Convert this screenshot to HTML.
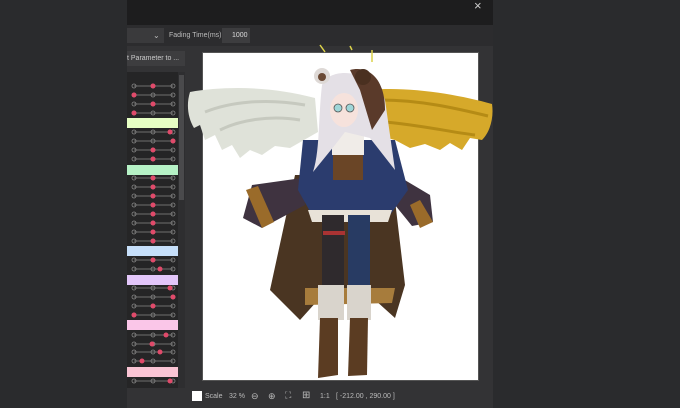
<!DOCTYPE html>
<html><head><style>
*{margin:0;padding:0;box-sizing:border-box}
body{width:680px;height:408px;background:#2a2b2d;position:relative;overflow:hidden;font-family:"Liberation Sans",sans-serif}
.a{position:absolute}
.t{color:#bbb;font-size:7px;white-space:nowrap}
</style></head><body>
<div class="a" style="left:127px;top:0;width:366px;height:408px;background:#333335"></div>
<div class="a" style="left:127px;top:0;width:366px;height:25px;background:#1d1d1e"></div>
<div class="a t" style="left:474px;top:-2px;font-size:13px;color:#ccc">×</div>
<div class="a" style="left:127px;top:25px;width:366px;height:21px;background:#2c2c2e"></div>
<div class="a" style="left:127px;top:28px;width:37px;height:15px;background:#3a3a3c"></div>
<div class="a t" style="left:153px;top:31px;font-size:8px">⌄</div>
<div class="a t" style="left:169px;top:32px">Fading Time(ms):</div>
<div class="a" style="left:222px;top:28px;width:28px;height:15px;background:#3d3d3f"></div>
<div class="a t" style="left:232px;top:32px;color:#ddd">1000</div>
<div class="a" style="left:127px;top:51px;width:58px;height:15px;background:#3d3d3f"></div>
<div class="a t" style="left:127px;top:55px;color:#ccc">t Parameter to ...</div>
<div class="a" style="left:127px;top:72px;width:51px;height:316px;background:#252526"></div>
<div class="a" style="left:178px;top:72px;width:7px;height:316px;background:#2e2e30"></div>
<div class="a" style="left:179px;top:75px;width:5px;height:125px;background:#4a4a4c"></div>
<svg class="a" style="left:0;top:0" width="680" height="408">
<g id="rows" stroke="#888" stroke-width="0.8" fill="none"></g>
</svg>
<div class="a" style="left:202px;top:52px;width:277px;height:329px;background:#fff;border:1px solid #555"></div>
<svg class="a" style="left:0;top:0" width="680" height="408">
<!-- wings -->
<path d="M315,98 C270,86 225,86 190,92 C186,105 188,118 194,128 L200,125 L205,140 L215,135 L222,150 L232,145 L240,158 L250,150 L262,155 L275,146 L290,148 L318,132 Z" fill="#dfe2d9"/>
<path d="M305,105 C265,98 230,102 205,112 M300,120 C270,115 240,120 220,130" stroke="#c6c9bf" fill="none" stroke-width="3"/>
<path d="M368,90 C410,86 460,95 492,104 C494,118 490,132 482,140 L470,138 L462,150 L450,143 L440,150 L425,144 L410,148 L395,140 L375,135 Z" fill="#d6a92a"/>
<path d="M380,100 C420,100 455,108 488,116 M385,122 C420,125 450,132 475,135" stroke="#b58b15" fill="none" stroke-width="3"/>
<!-- coat -->
<path d="M295,175 L270,290 L300,320 L318,300 L375,300 L395,318 L405,285 L392,175 Z" fill="#4a3522"/>
<path d="M305,288 L395,288 L392,303 L305,305 Z" fill="#a77c3c"/>
<!-- sleeves -->
<path d="M302,178 L252,185 L243,218 L262,228 L305,205 Z" fill="#3f3340"/>
<path d="M246,190 L262,228 L274,222 L258,186 Z" fill="#9a6b2a"/>
<path d="M398,176 L430,195 L433,222 L412,226 L395,205 Z" fill="#3f3340"/>
<path d="M420,200 L433,222 L420,228 L410,205 Z" fill="#9a6b2a"/>
<!-- body -->
<path d="M303,140 L395,140 L408,190 L390,215 L312,215 L298,190 Z" fill="#2b3c6e"/>
<rect x="333" y="155" width="30" height="25" fill="#6a4526"/>
<rect x="332" y="132" width="32" height="23" fill="#f0ece8"/>
<path d="M308,210 L392,210 L388,222 L312,222 Z" fill="#e8e2d8"/>
<!-- hair -->
<path d="M322,85 C318,120 320,150 313,172 L335,145 L345,132 L370,138 L395,170 L385,100 C375,70 330,65 322,85 Z" fill="#e4e0e6"/>
<path d="M350,70 C370,65 385,80 385,110 L372,130 L360,90 Z" fill="#5a3a2a"/>
<circle cx="322" cy="76" r="8" fill="#ded9d6"/><circle cx="322" cy="77" r="4" fill="#6b4a35"/>
<circle cx="363" cy="77" r="8" fill="#4a3020"/>
<ellipse cx="344" cy="110" rx="14" ry="17" fill="#f6e2dc"/>
<circle cx="338" cy="108" r="4" fill="#9fd6d8" stroke="#555" stroke-width="0.8"/>
<circle cx="350" cy="108" r="4" fill="#9fd6d8" stroke="#555" stroke-width="0.8"/>
<!-- legs -->
<rect x="322" y="215" width="22" height="95" fill="#2f2a2d"/>
<rect x="348" y="215" width="22" height="95" fill="#283b63"/>
<rect x="318" y="285" width="26" height="35" fill="#d9d4cc"/>
<rect x="347" y="285" width="24" height="35" fill="#d9d4cc"/>
<path d="M320,318 L338,318 L338,375 L318,378 Z" fill="#5b3c22"/>
<path d="M350,318 L368,318 L367,375 L348,376 Z" fill="#5b3c22"/>
<rect x="323" y="231" width="22" height="4" fill="#a33"/>
<path d="M320,45 L325,52 M350,46 L352,50 M372,50 L372,62" stroke="#dcd24a" stroke-width="1.5"/>
</svg>
<div class="a" style="left:192px;top:391px;width:10px;height:10px;background:#fff"></div>
<div class="a t" style="left:205px;top:393px">Scale</div>
<div class="a t" style="left:229px;top:393px">32 %</div>
<div class="a t" style="left:251px;top:391px;font-size:9px">⊖</div>
<div class="a t" style="left:268px;top:391px;font-size:9px">⊕</div>
<div class="a t" style="left:285px;top:390px;font-size:9px">⛶</div>
<div class="a t" style="left:302px;top:390px;font-size:10px">⊞</div>
<div class="a t" style="left:320px;top:393px">1:1</div>
<div class="a t" style="left:336px;top:393px">[ -212.00 ,  290.00 ]</div>
<script>
var g=document.getElementById('rows');var s='';
var bars=[[118,'#e6ffc4'],[165,'#b6f2c6'],[246,'#c6dffa'],[275,'#e3c6fa'],[320,'#fac6e8'],[367,'#fac4d4']];
var rows=[[86,153],[95,134],[104,153],[113,134],[132,170],[141,173],[150,153],[159,153],
[178,153],[187,153],[196,153],[205,153],[214,153],[223,153],[232,153],[241,153],[260,153],[269,160],
[288,170],[297,173],[306,153],[315,134],[335,166],[344,152],[352,160],[361,142],[381,170]];
bars.forEach(function(b){s+='<rect x="127" y="'+b[0]+'" width="51" height="10" fill="'+b[1]+'" stroke="none"/>';});
rows.forEach(function(r){var y=r[0];s+='<line x1="134" y1="'+y+'" x2="173" y2="'+y+'"/>';
[134,153,173].forEach(function(x){s+='<circle cx="'+x+'" cy="'+y+'" r="2"/>';});
s+='<circle cx="'+r[1]+'" cy="'+y+'" r="2.5" fill="#e04a6a" stroke="none"/>';});
g.innerHTML=s;
</script>
</body></html>
